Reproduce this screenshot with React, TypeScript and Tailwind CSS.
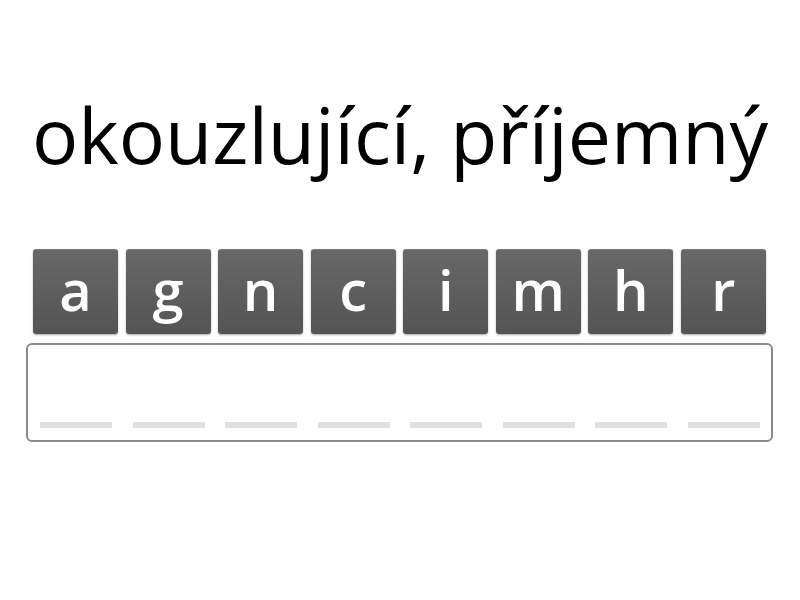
import React from 'react';

const letters = ['a', 'g', 'n', 'c', 'i', 'm', 'h', 'r'];

export default function App() {
  return (
    <div className="w-[800px] h-[600px] bg-white" style={{ fontFamily: '"Open Sans", sans-serif' }}>
      <div className="pt-[85px] h-[249px] text-center">
        <h1 className="text-[77px] leading-[100px] text-black font-normal">okouzlující, příjemný</h1>
      </div>
      <div className="w-[733px] ml-[33px] flex justify-between">
        {letters.map((l, i) => (
          <div
            key={i}
            className="w-[85px] h-[85px] rounded-[3px] border-t border-[#7c7c7c] bg-gradient-to-b from-[#686868] to-[#545454] shadow-[0_1px_2px_rgba(0,0,0,0.35)] flex items-center justify-center text-white text-[56px] font-semibold leading-none pb-[7px]"
          >
            {l}
          </div>
        ))}
      </div>
      <div className="mt-[9px] ml-[26px] w-[747px] h-[99px] border-2 border-[#8a8a8a] rounded-[6px] flex items-end justify-between pl-[12px] pr-[11px] pb-[12px]">
        {letters.map((_, i) => (
          <div key={i} className="w-[72px] h-[6px] bg-[#e0e0e0]" />
        ))}
      </div>
    </div>
  );
}
